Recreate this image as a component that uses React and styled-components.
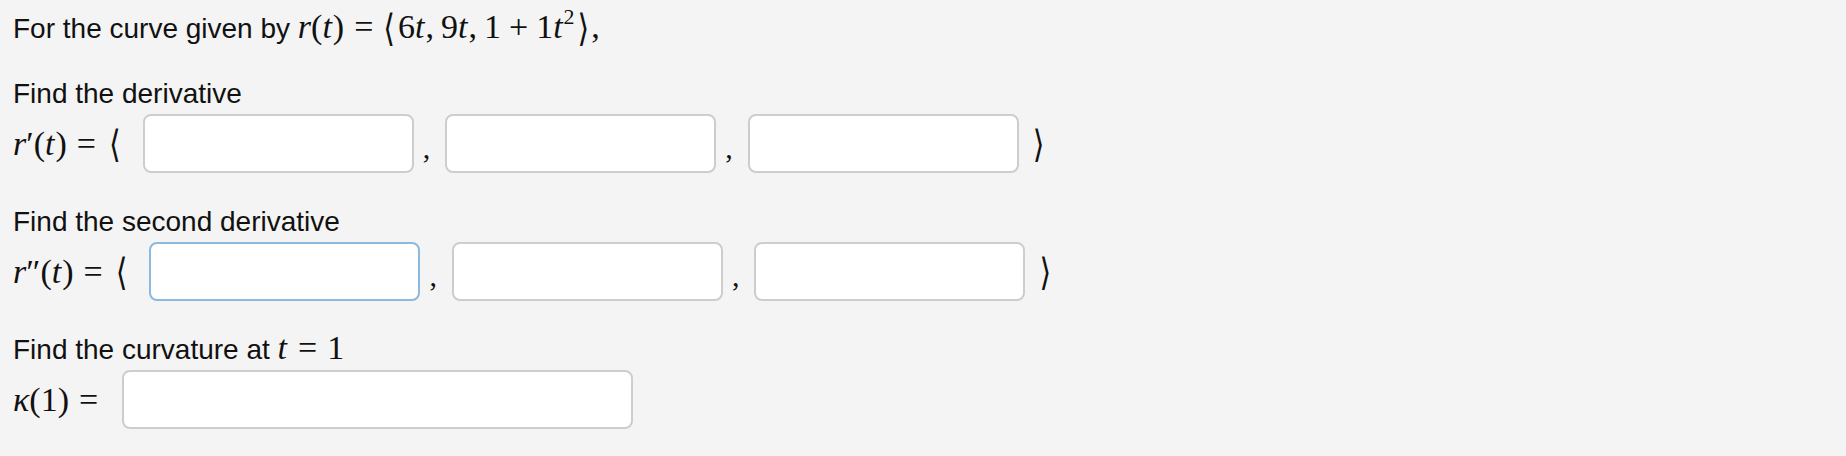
import React from "react";
import styled, { createGlobalStyle } from "styled-components";

const GlobalStyle = createGlobalStyle`
  html, body {
    margin: 0;
    padding: 0;
    background: #f4f4f4;
  }
`;

const Page = styled.div`
  min-height: 456px;
  box-sizing: border-box;
  padding: 11px 0 0 13px;
  font-family: "Liberation Sans", Arial, sans-serif;
  font-size: 28px;
  line-height: 32px;
  color: #111;
`;

const Prompt = styled.p`
  margin: 0;
  height: 32px;
`;

const Section = styled.section`
  margin-top: ${(p) => p.$gap}px;
`;

const Label = styled.div`
  height: 32px;
  margin-bottom: ${(p) => p.$space || 4}px;
`;

const Row = styled.div`
  display: flex;
  align-items: center;
  height: 59px;
`;

const Math = styled.span`
  font-family: "Liberation Serif", "Times New Roman", serif;
  font-size: 34px;
  line-height: 32px;
  white-space: pre;
`;

const V = styled.i`
  font-style: italic;
  margin-right: ${(p) => p.$kern || 0}px;
`;

const Op = styled.span`
  margin: 0 ${(p) => (p.$space === undefined ? 10 : p.$space)}px;
`;

const Sep = styled.span`
  margin-right: 7px;
`;

const Sup = styled.sup`
  font-size: 22px;
  line-height: 0;
  vertical-align: 14px;
  margin-left: 1px;
`;

const Bracket = styled.span`
  display: inline-block;
  font-family: "DejaVu Serif", serif;
  font-size: 30px;
  transform: scaleY(1.25);
  margin: ${(p) => p.$margin};
`;

const Comma = styled.span`
  font-family: "Liberation Serif", serif;
  font-size: 30px;
  margin: 8px 15px 0 9px;
`;

const AnswerBox = styled.input`
  box-sizing: border-box;
  width: ${(p) => p.$width || 271}px;
  height: 59px;
  margin: 0 0 0 ${(p) => p.$offset || 0}px;
  padding: 0 10px;
  border: 2px solid ${(p) => (p.$focused ? "#8db8e0" : "#cdcdcd")};
  border-radius: 8px;
  background: #fff;
  outline: none;
  font-size: 22px;
`;

const VectorAnswer = ({ prime, focusFirst }) => (
  <Row>
    <Math>
      <V>r</V>
      {prime}(<V $kern={1}>t</V>)<Op>=</Op>
    </Math>
    <Bracket $margin="0 22px 0 3px">⟨</Bracket>
    <AnswerBox $focused={focusFirst} />
    <Comma>,</Comma>
    <AnswerBox />
    <Comma>,</Comma>
    <AnswerBox />
    <Bracket $margin="0 0 0 14px">⟩</Bracket>
  </Row>
);

export default function App() {
  return (
    <>
      <GlobalStyle />
      <Page>
        <Prompt>
          For the curve given by{" "}
          <Math>
            <V>r</V>(<V $kern={1}>t</V>)<Op>=</Op>
            <Bracket $margin="0 3px 0 0">⟨</Bracket>6<V $kern={1}>t</V>
            <Sep>,</Sep>9<V $kern={1}>t</V>
            <Sep>,</Sep>1<Op $space={8}>+</Op>1<V>t</V>
            <Sup>2</Sup>
            <Bracket $margin="0 2px 0 3px">⟩</Bracket>,
          </Math>
        </Prompt>

        <Section $gap={35}>
          <Label>Find the derivative</Label>
          <VectorAnswer prime="′" />
        </Section>

        <Section $gap={33}>
          <Label>Find the second derivative</Label>
          <VectorAnswer prime="″" focusFirst />
        </Section>

        <Section $gap={31}>
          <Label $space={6}>
            Find the curvature at{" "}
            <Math>
              <V $kern={1}>t</V>
              <Op>=</Op>1
            </Math>
          </Label>
          <Row>
            <Math>
              <V>κ</V>(1)<Op>=</Op>
            </Math>
            <AnswerBox $width={511} $offset={14} />
          </Row>
        </Section>
      </Page>
    </>
  );
}
